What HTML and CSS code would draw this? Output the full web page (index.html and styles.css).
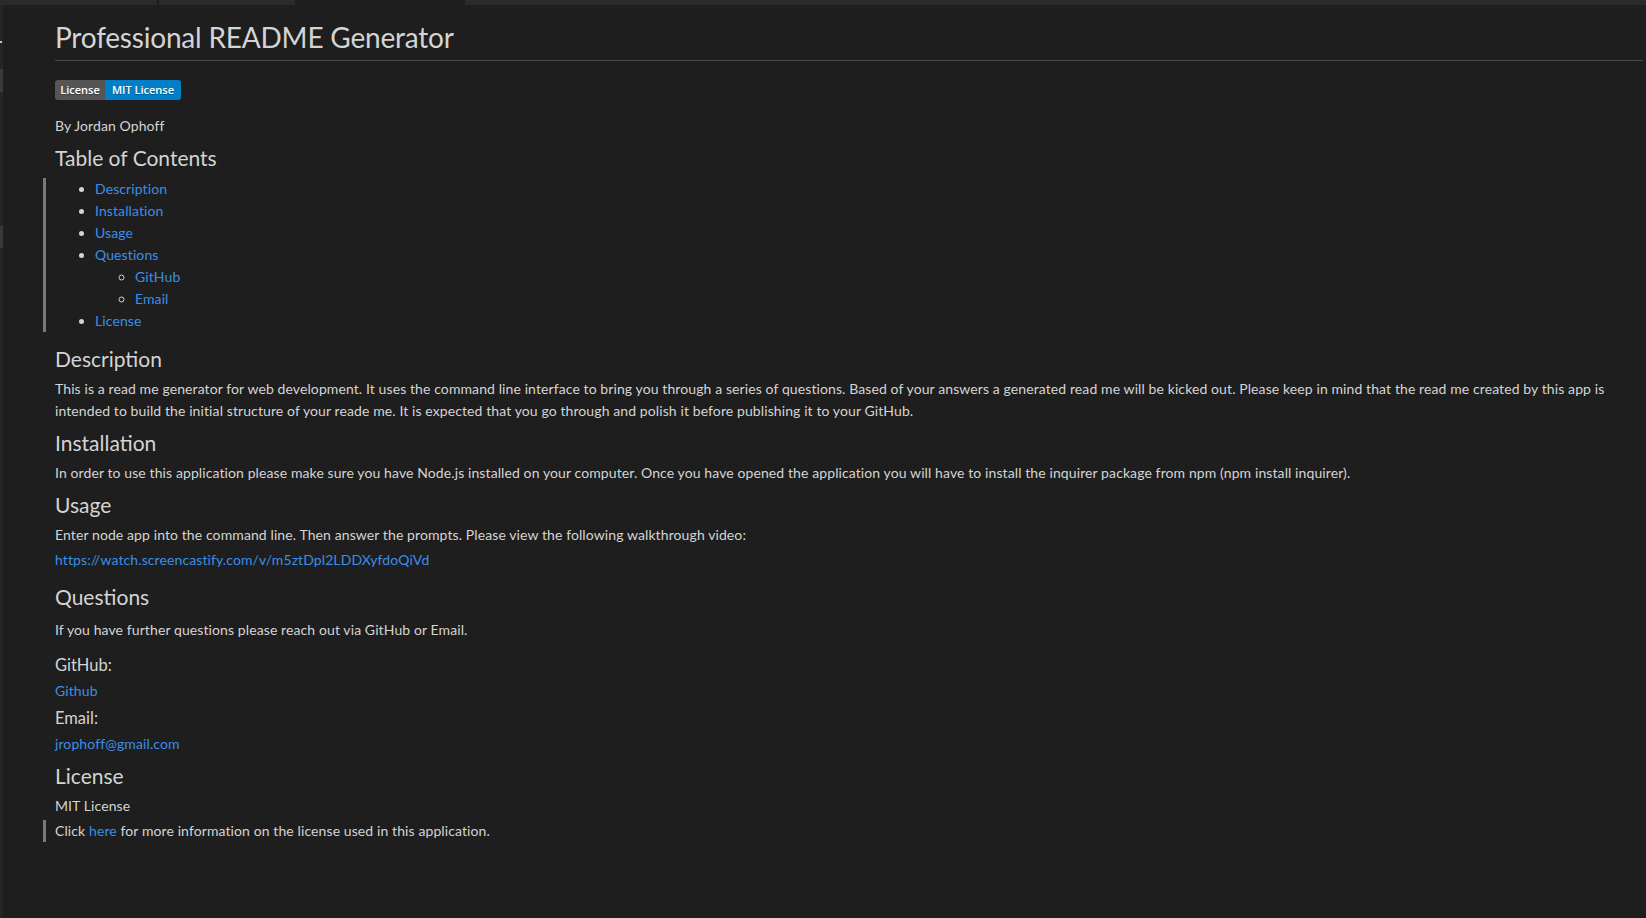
FILE: index.html
```html
<!DOCTYPE html>
<html lang="en">
  <head>
    <meta charset="UTF-8" />
    <meta name="viewport" content="width=device-width, initial-scale=1.0" />
    <title>Preview README.md</title>
    <link rel="stylesheet" href="styles.css">
  </head>
  <body>
    <div class="tabs">
      <span class="tab" style="width: 157px"></span>
      <span class="tab" style="width: 136px"></span>
      <span class="tab active" style="width: 166px"></span>
      <span class="tab rest"></span>
    </div>

    <div class="workspace">
      <div class="gutter">
        <span class="tick"></span>
        <span class="mark first"></span>
        <span class="mark second"></span>
      </div>

      <main class="preview">
        <h1>Professional README Generator</h1>

        <p class="badges">
          <span class="badge">
            <span class="badge-label">License</span>
            <span class="badge-value">MIT License</span>
          </span>
        </p>

        <p class="byline">By Jordan Ophoff</p>

        <h2>Table of Contents</h2>
        <ul class="toc active-line">
          <li><a href="#description">Description</a></li>
          <li><a href="#installation">Installation</a></li>
          <li><a href="#usage">Usage</a></li>
          <li>
            <a href="#questions">Questions</a>
            <ul>
              <li><a href="#github">GitHub</a></li>
              <li><a href="#email">Email</a></li>
            </ul>
          </li>
          <li><a href="#license">License</a></li>
        </ul>

        <h2 id="description">Description</h2>
        <p>This is a read me generator for web development. It uses the command line interface to bring you through a series of questions. Based of your answers a generated read me will be kicked out. Please keep in mind that the read me created by this app is intended to build the initial structure of your reade me. It is expected that you go through and polish it before publishing it to your GitHub.</p>

        <h2 id="installation">Installation</h2>
        <p>In order to use this application please make sure you have Node.js installed on your computer. Once you have opened the application you will have to install the inquirer package from npm (npm install inquirer).</p>

        <h2 id="usage">Usage</h2>
        <p>Enter node app into the command line. Then answer the prompts. Please view the following walkthrough video:</p>
        <p class="spaced"><a href="https://watch.screencastify.com/v/m5ztDpl2LDDXyfdoQiVd">https://watch.screencastify.com/v/m5ztDpl2LDDXyfdoQiVd</a></p>

        <h2 id="questions">Questions</h2>
        <p class="spaced intro">If you have further questions please reach out via GitHub or Email.</p>

        <h3 id="github">GitHub:</h3>
        <p><a href="https://github.com/">Github</a></p>

        <h3 id="email">Email:</h3>
        <p><a href="mailto:jrophoff@gmail.com">jrophoff@gmail.com</a></p>

        <h2 id="license">License</h2>
        <p>MIT License</p>
        <p class="active-line">Click <a href="https://opensource.org/licenses/MIT">here</a> for more information on the license used in this application.</p>
      </main>
    </div>
  </body>
</html>
```

FILE: styles.css
```css
body {
  margin: 0;
  background-color: #1e1e1e;
  color: #d4d4d4;
  font-family: Lato, "Noto Sans", sans-serif;
  font-size: 14px;
  line-height: 22px;
  letter-spacing: 0.1px;
}

/* editor tab strip, only the bottom edge is visible */
.tabs {
  display: flex;
  gap: 2px;
  height: 5px;
}
.tab {
  background-color: #2b2b2b;
}
.tab.active {
  background-color: #1e1e1e;
}
.tab.rest {
  flex: 1;
}

.workspace {
  display: flex;
  min-height: 913px;
}

.gutter {
  display: flex;
  flex-direction: column;
  width: 3px;
  background-color: #252526;
}
.tick {
  width: 2px;
  height: 2px;
  margin-top: 36px;
  background-color: #c8c8c8;
}
.mark {
  height: 23px;
  background-color: #3a3a3c;
}
.mark.first {
  margin-top: 26px;
}
.mark.second {
  margin-top: 134px;
  height: 22px;
}

.preview {
  flex: 1;
  padding: 0 3px 0 52px;
}

a {
  color: #3a8ee8;
  text-decoration: none;
}

h1,
h2,
h3 {
  font-weight: normal;
}

h1 {
  font-size: 28px;
  line-height: 34px;
  letter-spacing: -0.2px;
  margin: 15px 0 0;
  padding-bottom: 6px;
  border-bottom: 1px solid #4a4a4a;
}

h2 {
  font-size: 21px;
  line-height: 26px;
  letter-spacing: 0;
  margin: 8px 0 6px;
}

h3 {
  font-size: 16.5px;
  line-height: 22px;
  letter-spacing: 0;
  margin: 5px 0 4px;
}

p {
  margin: 0 0 3px;
}
p.spaced {
  margin-bottom: 13px;
}
p.intro {
  margin-top: 9px;
}

.badges {
  display: flex;
  margin-top: 19px;
}
.byline {
  margin-top: 15px;
}

.badge {
  display: flex;
  height: 20px;
  border-radius: 3px;
  overflow: hidden;
  font-family: "Open Sans", "DejaVu Sans", sans-serif;
  font-size: 11px;
  font-weight: 600;
  line-height: 20px;
  letter-spacing: 0;
  color: #fff;
  text-shadow: 0 1px 0 rgba(1, 1, 1, 0.3);
}
.badge-label,
.badge-value {
  text-align: center;
}
.badge-label {
  width: 50px;
  background-color: #555;
}
.badge-value {
  width: 76px;
  background-color: #007ec6;
}

ul {
  margin: 7px 0 14px;
  padding-left: 40px;
}
ul ul {
  margin: 0;
  list-style-type: circle;
}

/* vscode marks the line under the cursor with a bar in the margin */
.active-line {
  position: relative;
}
.active-line::before {
  content: "";
  position: absolute;
  top: 0;
  bottom: 0;
  left: -12px;
  border-left: 3px solid rgba(255, 255, 255, 0.4);
}
```
